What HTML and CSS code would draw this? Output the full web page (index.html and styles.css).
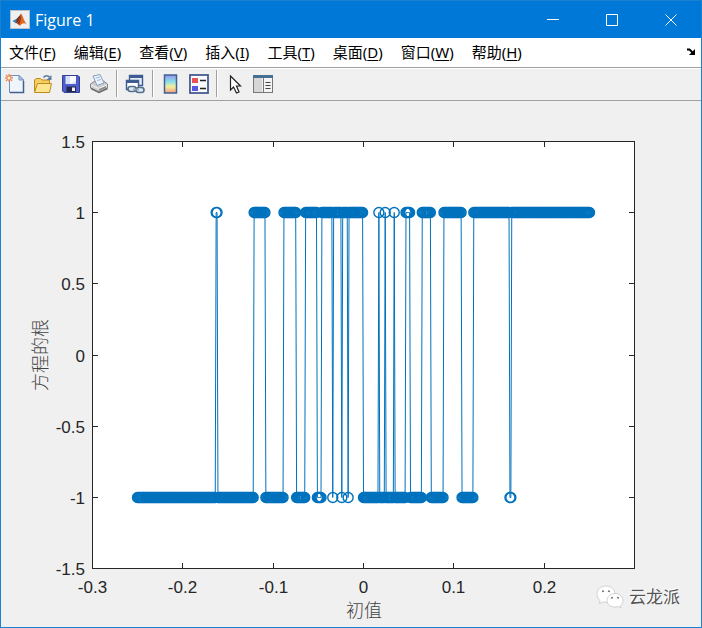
FILE: index.html
```html
<!DOCTYPE html>
<html lang="zh-CN">
<head>
    <meta charset="UTF-8">
    <meta name="viewport" content="width=device-width, initial-scale=1.0">
    <title>Figure 1</title>
    <link rel="stylesheet" href="styles.css">
</head>
<body>
    <div class="window">
        <header class="titlebar">
            <svg class="logo" viewBox="0 0 20 20">
                <rect x="0.5" y="0.5" width="19" height="18" fill="#eef0f1" stroke="#b9c2c9"/>
                <path d="M2.500 11L7 8.500L9 10L6 13.500Z" fill="#3c83ae"/>
                <path d="M7 8.500L11 4L10 11L6 13.500Z" fill="#6b2c22"/>
                <path d="M11 3.500C13 6 14 11 17 14.500C14 12.500 12 13 10 16L7 13C9 11 10 7 11 3.500Z" fill="#e36b1e"/>
                <path d="M11 3.500C10 9 9 12 7 13L9 15C11 11 11.500 8 11 3.500Z" fill="#9c321c"/>
            </svg>
            <h1>Figure 1</h1>
            <div class="win-buttons">
                <button aria-label="最小化"><svg viewBox="0 0 14 14"><path d="M1 6.500H13"/></svg></button>
                <button aria-label="最大化"><svg viewBox="0 0 14 14"><path d="M1.500 1.500H12.500V12.500H1.500Z"/></svg></button>
                <button aria-label="关闭"><svg viewBox="0 0 14 14"><path d="M1.500 1.500L12.500 12.500M12.500 1.500L1.500 12.500"/></svg></button>
            </div>
        </header>

        <nav class="menubar">
            <button>文件(<u>F</u>)</button>
            <button>编辑(<u>E</u>)</button>
            <button>查看(<u>V</u>)</button>
            <button>插入(<u>I</u>)</button>
            <button>工具(<u>T</u>)</button>
            <button>桌面(<u>D</u>)</button>
            <button>窗口(<u>W</u>)</button>
            <button>帮助(<u>H</u>)</button>
            <button class="dock" aria-label="停靠">
                <svg viewBox="0 0 10 8"><path d="M1 1.500H3.500L7 5" fill="none" stroke="#000" stroke-width="2"/><path d="M9 1V7H3Z"/></svg>
            </button>
        </nav>

        <div class="toolbar">
            <button aria-label="新建">
                <svg viewBox="0 0 20 20">
                    <path d="M4.500 1.500H14L18.500 6V18.500H4.500Z" fill="#eef5fd" stroke="#6d8fba"/>
                    <path d="M5 18.500H18.500V7" fill="none" stroke="#415f93" stroke-width="1.500"/>
                    <path d="M14 1.500V6H18.500Z" fill="#b9d0ec" stroke="#6d8fba"/>
                    <path d="M4 0V8M0 4H8M1 1L7 7M7 1L1 7" stroke="#e8865c" stroke-width="1.300"/>
                    <circle cx="4" cy="4" r="1.500" fill="#fff3c8"/>
                </svg>
            </button>
            <button aria-label="打开">
                <svg viewBox="0 0 20 20">
                    <path d="M1.500 17V6L3 4.500H7.500L9 6H16.500V17Z" fill="#f3cf62" stroke="#bd8b1d"/>
                    <path d="M1.500 18.500L4.500 9.500H18.500L16.500 18.500Z" fill="#fde68f" stroke="#bd8b1d"/>
                    <path d="M10.500 3.500C12 1 15 1 17 3.500" fill="none" stroke="#5f7fa0" stroke-width="1.500"/>
                    <path d="M18.500 1V6H13.500Z" fill="#5f7fa0"/>
                </svg>
            </button>
            <button aria-label="保存">
                <svg viewBox="0 0 20 20">
                    <path d="M1.500 1.500H17L18.500 3V18.500H3L1.500 17Z" fill="#4f5ccc" stroke="#343f92"/>
                    <path d="M4.500 2H15V10H4.500Z" fill="#d5e0f4"/>
                    <path d="M9 2H15V7L9 10Z" fill="#f7faff"/>
                    <path d="M5.500 12.500H15V18H5.500Z" fill="#24284f"/>
                    <path d="M11 13.500H14V17H11Z" fill="#f0f0f4"/>
                </svg>
            </button>
            <button aria-label="打印">
                <svg viewBox="0 0 20 20">
                    <path d="M1.500 10L6 7L8 10L14.500 7L18.500 10V14L10 18.500L1.500 14Z" fill="#cdcdcd" stroke="#858585"/>
                    <path d="M4 2L11 0.500L15 9L8 11.500Z" fill="#eaf3fd" stroke="#8aa0bb"/>
                    <path d="M6.500 4L11 3M8 6.500L12 5.500" stroke="#9db9da"/>
                    <path d="M2 11L9.500 14.500L18 11" fill="none" stroke="#f5f5f5"/>
                    <path d="M2 14.500L10 18.500L18.500 14.500" fill="none" stroke="#6c6c6c" stroke-width="1.500"/>
                    <path d="M10 15L17 12V14L10 17Z" fill="#8c8c8c"/>
                </svg>
            </button>
            <span class="separator"></span>
            <button aria-label="链接绘图">
                <svg viewBox="0 0 20 20">
                    <path d="M4.500 1.500H17.500V11.500H4.500Z" fill="#e4ebf3" stroke="#3e5c92" stroke-width="1.400"/>
                    <path d="M4 1H18V4H4Z" fill="#3e5c92"/>
                    <path d="M1.500 6.500H13.500V15.500H1.500Z" fill="#fff" stroke="#3e5c92" stroke-width="1.400"/>
                    <path d="M1 6H14V9H1Z" fill="#3e5c92"/>
                    <g fill="#dfe7ef" stroke="#536f8c" stroke-width="1.600">
                        <rect x="3" y="12.500" width="8" height="5" rx="2.500"/>
                        <rect x="11" y="13.500" width="8" height="5" rx="2.500"/>
                    </g>
                    <path d="M8 15L14 16" stroke="#8fa9c4" stroke-width="1.500"/>
                </svg>
            </button>
            <span class="separator"></span>
            <button aria-label="插入颜色栏">
                <svg viewBox="0 0 20 20">
                    <defs>
                        <linearGradient id="colors" x1="0" y1="0" x2="0" y2="1">
                            <stop offset="0" stop-color="#9a95e8"/>
                            <stop offset="0.350" stop-color="#86dcf0"/>
                            <stop offset="0.650" stop-color="#f3ee9a"/>
                            <stop offset="1" stop-color="#f29a86"/>
                        </linearGradient>
                    </defs>
                    <rect x="3.500" y="1" width="12" height="18" fill="url(#colors)" stroke="#415f93" stroke-width="1.500"/>
                </svg>
            </button>
            <button aria-label="插入图例">
                <svg viewBox="0 0 20 20">
                    <rect x="1" y="1" width="18" height="18" fill="#fafbff" stroke="#465b8f" stroke-width="1.800"/>
                    <rect x="3" y="4" width="6" height="5" fill="#e75454"/>
                    <rect x="3" y="12" width="6" height="5" fill="#5757e2"/>
                    <path d="M11 6.500H17M11 14.500H17" stroke="#222" stroke-width="1.500"/>
                </svg>
            </button>
            <span class="separator"></span>
            <button aria-label="编辑绘图">
                <svg viewBox="0 0 20 20">
                    <path d="M5.500 2V16L8.500 13L11.500 19L14 18L11.500 12H15.500Z" fill="#fff" stroke="#222" stroke-width="1.200"/>
                </svg>
            </button>
            <button aria-label="打开属性检查器">
                <svg viewBox="0 0 20 20">
                    <rect x="0.500" y="1.500" width="19" height="17" fill="#f4f4f4" stroke="#777"/>
                    <rect x="0" y="1" width="20" height="3" fill="#456f94"/>
                    <rect x="1" y="4" width="8" height="14" fill="#d6d6d6"/>
                    <path d="M10.500 4V18" stroke="#777"/>
                    <path d="M12.500 8.500H17.500M12.500 11.500H17.500M12.500 14.500H17.500" stroke="#444" stroke-width="1.200"/>
                </svg>
            </button>
        </div>

        <main class="figure">
            <svg class="plot" viewBox="1 101 700 526" role="img" aria-label="方程的根 / 初值">
                <rect x="92.500" y="141.500" width="542" height="427" fill="#fff"/>
                <g id="axes" class="axes">
                    <rect x="92.500" y="141.500" width="542" height="427"/>
                </g>
                <g id="labels" class="ticks"></g>
                <g id="series" class="series"></g>
                <text class="axis-label" x="364" y="617">初值</text>
                <text class="axis-label" transform="translate(47 355) rotate(-90)">方程的根</text>
            </svg>
            <div class="watermark">
                <svg viewBox="0 0 28 24">
                    <path d="M10 1C4.500 1 1 4.500 1 9C1 12 2.500 14 4 15.500L3.500 18.500L7 17C12 18 19 15 19 9C19 4.500 15 1 10 1Z"/>
                    <path d="M19 8.500C14 8.500 11 12 11 15.500C11 19.500 14.500 22 19 22L22 21.500L25 23L24.500 20.500C26 19.500 27 17.500 27 15.500C27 12 24 8.500 19 8.500Z"/>
                    <path class="eyes" d="M6 6.500L8 6M12 6L14 6.500M15 13L17 12.500M21 12.500L23 13"/>
                </svg>
                <span>云龙派</span>
            </div>
        </main>
    </div>
    <script>
        const NS = 'http://www.w3.org/2000/svg';
        const px = x => 363.5 + x * 904;
        const py = y => 355 - y * 142.5;

        function add(parent, name, attrs, text) {
            const el = document.createElementNS(NS, name);
            for (const key in attrs) {
                el.setAttribute(key, attrs[key]);
            }
            if (text) {
                el.textContent = text;
            }
            document.getElementById(parent).appendChild(el);
        }

        // Ticks on all four sides
        ['-0.3', '-0.2', '-0.1', '0', '0.1', '0.2'].forEach(t => {
            const x = Math.floor(px(Number(t))) + 0.5;
            add('axes', 'path', { d: `M${x} 568V563M${x} 142V147` });
            add('labels', 'text', { x: x, y: 593, 'text-anchor': 'middle' }, t);
        });
        ['1.5', '1', '0.5', '0', '-0.5', '-1', '-1.5'].forEach(t => {
            const y = Math.floor(py(Number(t))) + 0.5;
            add('axes', 'path', { d: `M92 ${y}H98M635 ${y}H629` });
            add('labels', 'text', { x: 85, y: y + 6, 'text-anchor': 'end' }, t);
        });

        // Start values (in thousandths) above zero that converge to the root 1
        const positive = [[17, 17], [24, 24], [34, 34], [47, 51], [65, 74], [89, 108], [122, 161], [164, 250]];

        function root(i) {
            const hit = positive.some(([a, b]) => Math.abs(i) >= a && Math.abs(i) <= b);
            return (hit ? 1 : -1) * (i < 0 ? -1 : 1);
        }

        let line = '';
        for (let i = -250; i <= 250; i++) {
            const x = px(i / 1000);
            const y = py(root(i));
            line += (line ? 'L' : 'M') + x + ' ' + y;
            add('series', 'circle', { cx: x, cy: y, r: 5 });
        }
        add('series', 'path', { d: line });
    </script>
</body>
</html>
```
FILE: styles.css
```css
* {
    box-sizing: border-box;
}
body {
    margin: 0;
    font-family: "Noto Sans", "Noto Sans CJK SC", sans-serif;
    background-color: #f0f0f0;
}
button {
    padding: 0;
    border: none;
    background: none;
    font: inherit;
    color: inherit;
}
.window {
    display: flex;
    flex-direction: column;
    min-height: 100vh;
    border: 1px solid #1a80d0;
}
.titlebar {
    display: flex;
    align-items: center;
    height: 37px;
    padding: 0 1px 0 9px;
    background-color: #0078d7;
    color: white;
}
.logo {
    width: 20px;
    height: 20px;
}
.titlebar h1 {
    flex: 1;
    margin: 0 0 0 5px;
    font-family: "Open Sans", "Noto Sans", sans-serif;
    font-size: 16px;
    font-weight: normal;
}
.win-buttons {
    display: flex;
}
.win-buttons button {
    display: flex;
    align-items: center;
    justify-content: center;
    width: 59px;
    height: 36px;
}
.win-buttons svg {
    width: 14px;
    height: 14px;
    fill: none;
    stroke: white;
}
.menubar {
    display: flex;
    align-items: center;
    gap: 18px;
    height: 30px;
    padding: 0 5px 2px 8px;
    background-color: white;
    border-bottom: 1px solid #a0a0a0;
    font-size: 15px;
    color: black;
}
.menubar button {
    line-height: 20px;
    white-space: nowrap;
}
.menubar u {
    text-underline-offset: 2px;
}
.menubar .dock {
    display: flex;
    margin-left: auto;
}
.dock svg {
    width: 10px;
    height: 8px;
}
.toolbar {
    display: flex;
    align-items: center;
    height: 33px;
    padding-bottom: 2px;
    border-top: 1px solid white;
    border-bottom: 1px solid #a0a0a0;
}
.toolbar button {
    display: flex;
    justify-content: center;
    width: 28px;
}
.toolbar svg {
    width: 20px;
    height: 20px;
}
.separator {
    width: 2px;
    height: 27px;
    margin: 0 3px;
    border-left: 1px solid #a0a0a0;
    border-right: 1px solid white;
}
.figure {
    position: relative;
    flex: 1;
}
.plot {
    display: block;
    width: 100%;
    height: auto;
}
.axes {
    fill: none;
    stroke: #262626;
}
.ticks {
    font-family: "Liberation Sans", Arial, sans-serif;
    font-size: 17px;
    fill: #262626;
}
.axis-label {
    font-family: "Noto Sans CJK SC", sans-serif;
    font-size: 18px;
    font-weight: 300;
    text-anchor: middle;
    fill: #444;
}
.series {
    fill: none;
    stroke: #0072bd;
}
.series circle {
    stroke-width: 1.4;
}
.watermark {
    position: absolute;
    right: 21px;
    bottom: 17px;
    display: flex;
    align-items: center;
    gap: 5px;
    font-size: 17px;
    line-height: 26px;
    color: #555;
    text-shadow: -1px -1px 0 white;
}
.watermark svg {
    width: 28px;
    height: 24px;
    fill: white;
    stroke: #aaa;
    stroke-width: 0.5;
}
.watermark .eyes {
    fill: none;
    stroke: #777;
    stroke-width: 1.5;
}
```
